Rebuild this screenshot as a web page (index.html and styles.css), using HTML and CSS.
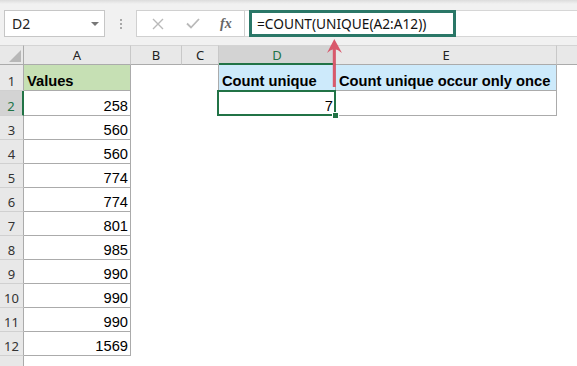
FILE: index.html
```html
<!DOCTYPE html>
<html lang="en">
<head>
    <meta charset="UTF-8">
    <meta name="viewport" content="width=device-width, initial-scale=1.0">
    <title>Count unique</title>
    <link rel="stylesheet" href="styles.css">
</head>
<body>
    <div class="toolbar">
        <div class="namebox">
            <span>D2</span>
            <span class="caret"></span>
        </div>
        <div class="grip"><i></i><i></i><i></i></div>
        <div class="btns">
            <svg class="ico" width="12" height="12" viewBox="0 0 12 12"><path d="M1 1 L11 11 M11 1 L1 11" stroke="#b9b9b9" stroke-width="1.4" fill="none"/></svg>
            <svg class="ico" width="14" height="11" viewBox="0 0 14 11"><path d="M1 5.5 L5 9.5 L13 1" stroke="#b9b9b9" stroke-width="1.8" fill="none"/></svg>
            <span class="fx">fx</span>
        </div>
        <div class="input">
            <div class="formula">=COUNT(UNIQUE(A2:A12))</div>
        </div>
    </div>

    <div class="sheet">
        <!-- header row -->
        <div class="corner"><span class="tri"></span></div>
        <div class="ch">A</div>
        <div class="ch">B</div>
        <div class="ch">C</div>
        <div class="ch sel">D</div>
        <div class="ch">E</div>
        <div class="ch last"></div>

        <!-- row 1 -->
        <div class="rh">1</div>
        <div class="c g green bold">Values</div>
        <div class="c"></div>
        <div class="c br"></div>
        <div class="c g blue bold">Count unique</div>
        <div class="c g blue bold">Count unique occur only once</div>
        <div class="c"></div>

        <!-- row 2 -->
        <div class="rh sel">2</div>
        <div class="c g num">258</div>
        <div class="c"></div>
        <div class="c br"></div>
        <div class="c g num active">7</div>
        <div class="c g"></div>
        <div class="c"></div>

        <div class="rh">3</div><div class="c g num">560</div><div class="c"></div><div class="c"></div><div class="c"></div><div class="c"></div><div class="c"></div>
        <div class="rh">4</div><div class="c g num">560</div><div class="c"></div><div class="c"></div><div class="c"></div><div class="c"></div><div class="c"></div>
        <div class="rh">5</div><div class="c g num">774</div><div class="c"></div><div class="c"></div><div class="c"></div><div class="c"></div><div class="c"></div>
        <div class="rh">6</div><div class="c g num">774</div><div class="c"></div><div class="c"></div><div class="c"></div><div class="c"></div><div class="c"></div>
        <div class="rh">7</div><div class="c g num">801</div><div class="c"></div><div class="c"></div><div class="c"></div><div class="c"></div><div class="c"></div>
        <div class="rh">8</div><div class="c g num">985</div><div class="c"></div><div class="c"></div><div class="c"></div><div class="c"></div><div class="c"></div>
        <div class="rh">9</div><div class="c g num">990</div><div class="c"></div><div class="c"></div><div class="c"></div><div class="c"></div><div class="c"></div>
        <div class="rh">10</div><div class="c g num">990</div><div class="c"></div><div class="c"></div><div class="c"></div><div class="c"></div><div class="c"></div>
        <div class="rh">11</div><div class="c g num">990</div><div class="c"></div><div class="c"></div><div class="c"></div><div class="c"></div><div class="c"></div>
        <div class="rh">12</div><div class="c g num">1569</div><div class="c"></div><div class="c"></div><div class="c"></div><div class="c"></div><div class="c"></div>
        <div class="rh">13</div><div class="c"></div><div class="c"></div><div class="c"></div><div class="c"></div><div class="c"></div><div class="c"></div>
    </div>

    <!-- callout arrow pointing at the formula -->
    <svg class="arrow" width="17" height="50" viewBox="0 0 17 50">
        <rect x="6.8" y="10" width="3" height="38" fill="#d9596c"/>
        <path d="M8.3 0 L16 14 Q12 10.5 8.3 10 Q4.6 10.5 1 14 Z" fill="#d9596c"/>
    </svg>
</body>
</html>
```

FILE: styles.css
```css
body {
    margin: 0;
    padding: 0;
    width: 577px;
    height: 366px;
    overflow: hidden;
    background-color: #fff;
    font-family: "Liberation Sans", Arial, sans-serif;
    position: relative;
}

/* formula bar */
.toolbar {
    height: 45px;
    box-sizing: border-box;
    padding-top: 10px;
    display: flex;
    align-items: flex-start;
    background: linear-gradient(#dcdcdc, #f1f1f1 4px, #f1f1f1);
}

.namebox {
    margin-left: 4px;
    width: 101px;
    height: 27px;
    box-sizing: border-box;
    border: 1px solid #c6c6c6;
    background-color: #fff;
    display: flex;
    align-items: center;
    justify-content: space-between;
    padding: 0 5px 0 7px;
    font-family: "Noto Sans", sans-serif;
    font-size: 14px;
    color: #222;
}

.caret {
    width: 0;
    height: 0;
    border-left: 4px solid transparent;
    border-right: 4px solid transparent;
    border-top: 4px solid #777;
}

.grip {
    width: 31px;
    height: 27px;
    display: flex;
    flex-direction: column;
    align-items: center;
    justify-content: center;
    gap: 2px;
}

.grip i {
    width: 2px;
    height: 2px;
    background-color: #a8a8a8;
}

.btns {
    width: 109px;
    height: 27px;
    box-sizing: border-box;
    border: 1px solid #d0d0d0;
    background-color: #fff;
    display: flex;
    align-items: center;
    padding-left: 15px;
    gap: 22px;
}

.fx {
    font-family: "Liberation Serif", serif;
    font-style: italic;
    font-weight: bold;
    font-size: 14px;
    color: #666;
    margin-left: -2px;
}

.input {
    flex: 1;
    height: 27px;
    box-sizing: border-box;
    border-top: 1px solid #d6d6d6;
    border-bottom: 1px solid #d6d6d6;
    background-color: #fff;
    padding-left: 4px;
    display: flex;
}

.formula {
    width: 207px;
    height: 27px;
    margin-top: -1px;
    box-sizing: border-box;
    border: 3px solid #2a7767;
    background-color: #fff;
    display: flex;
    align-items: center;
    padding-left: 5px;
    font-family: "Noto Sans", sans-serif;
    font-size: 13.7px;
    color: #111;
}

/* sheet grid */
.sheet {
    display: grid;
    grid-template-columns: 24px 107px 51px 37px 117px 221px 20px;
    grid-template-rows: 20px 26px 25px repeat(11, 24px);
}

.corner, .ch {
    background-color: #e8e8e8;
    border-right: 1px solid #c8c8c8;
    border-bottom: 1px solid #ababab;
    border-top: 1px solid #d4d4d4;
    box-sizing: border-box;
}

.corner {
    position: relative;
    border-right-color: #ababab;
}

.tri {
    position: absolute;
    right: 2px;
    bottom: 2px;
    width: 0;
    height: 0;
    border-left: 12px solid transparent;
    border-bottom: 12px solid #b7b7b7;
}

.ch {
    display: flex;
    align-items: center;
    justify-content: center;
    font-family: "Noto Sans", sans-serif;
    font-size: 13px;
    color: #222;
}

.ch.sel {
    background-color: #d3d3d3;
    border-bottom: 2px solid #217346;
    color: #217346;
}

.ch.last {
    background-color: #e8e8e8;
    border-right: none;
}

.rh {
    background-color: #e8e8e8;
    border-right: 1px solid #ababab;
    border-bottom: 1px solid #d0d0d0;
    box-sizing: border-box;
    display: flex;
    align-items: flex-end;
    justify-content: center;
    font-family: "Noto Sans", sans-serif;
    font-size: 13px;
    color: #333;
}

.rh.sel {
    background-color: #d3d3d3;
    border-right: 2px solid #217346;
    color: #217346;
}

.c {
    box-sizing: border-box;
    display: flex;
    align-items: flex-end;
    padding: 0 2px 1px 3px;
    font-size: 14.7px;
    color: #000;
    white-space: nowrap;
}

.c.g {
    border-right: 1px solid #ababab;
    border-bottom: 1px solid #ababab;
}

.c.br {
    border-right: 1px solid #ababab;
}

.num {
    justify-content: flex-end;
}

.bold {
    font-weight: bold;
}

.green {
    background-color: #c6e0b4;
}

.blue {
    background-color: #cdeafb;
}

/* active cell outline and fill handle */
.active {
    position: relative;
}

.active::after {
    content: "";
    position: absolute;
    left: -2px;
    top: -1px;
    right: -1px;
    bottom: -1px;
    border: 2px solid #217346;
}

.active::before {
    content: "";
    position: absolute;
    right: -4px;
    bottom: -4px;
    width: 5px;
    height: 5px;
    background-color: #217346;
    border: 1px solid #fff;
    z-index: 1;
}

.arrow {
    position: absolute;
    left: 326px;
    top: 39px;
}
```
